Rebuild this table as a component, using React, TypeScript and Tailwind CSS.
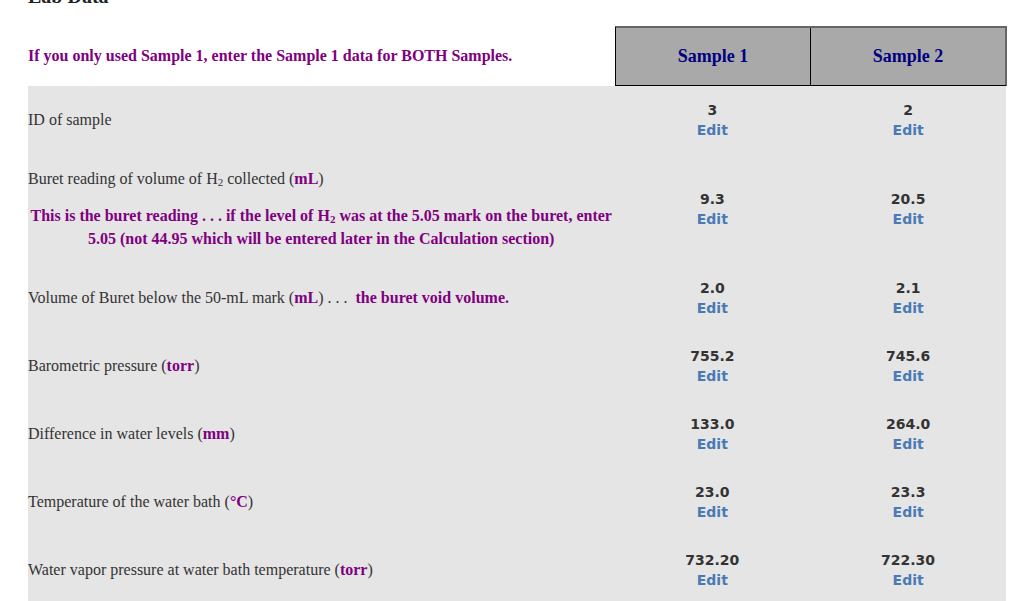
const rows = [
  { label: "ID of sample", s1: "3", s2: "2" },
  { label: "buret", s1: "9.3", s2: "20.5" },
  { label: "void", s1: "2.0", s2: "2.1" },
  { label: "Barometric pressure", unit: "torr", s1: "755.2", s2: "745.6" },
  { label: "Difference in water levels", unit: "mm", s1: "133.0", s2: "264.0" },
  { label: "Temperature of the water bath", unit: "°C", s1: "23.0", s2: "23.3" },
  { label: "Water vapor pressure at water bath temperature", unit: "torr", s1: "732.20", s2: "722.30" },
];

function Value({ v }: { v: string }) {
  return (
    <div className="w-[196px] flex flex-col items-center justify-center font-['DejaVu_Sans',Verdana,sans-serif] font-bold text-[14px] leading-[20px]">
      <div className="text-[#333]">{v}</div>
      <a className="text-[#4a7ab5] cursor-pointer">Edit</a>
    </div>
  );
}

function Label({ r }: { r: (typeof rows)[number] }) {
  if (r.label === "buret") {
    return (
      <div className="w-full">
        <div className="leading-[20px]">
          Buret reading of volume of H<sub className="text-[11px]">2</sub> collected (<b className="text-[#800080]">mL</b>)
        </div>
        <div className="mt-[15px] leading-[23px] text-center font-bold text-[#800080] whitespace-nowrap">
          This is the buret reading . . . if the level of H<sub className="text-[11px]">2</sub> was at the 5.05 mark on the buret, enter
          <br />
          5.05 (not 44.95 which will be entered later in the Calculation section)
        </div>
      </div>
    );
  }
  if (r.label === "void") {
    return (
      <div>
        Volume of Buret below the 50-mL mark (<b className="text-[#800080]">mL</b>) . . .&nbsp;{" "}
        <b className="text-[#800080]">the buret void volume.</b>
      </div>
    );
  }
  return (
    <div>
      {r.label}
      {r.unit && (
        <>
          {" "}(<b className="text-[#800080]">{r.unit}</b>)
        </>
      )}
    </div>
  );
}

export default function App() {
  return (
    <div className="bg-white w-[1024px] h-[601px] overflow-hidden pl-[28px] font-['Liberation_Serif','Times_New_Roman',serif] text-[16px] text-[#333]">
      <h3 className="text-[20px] leading-[20px] font-bold text-[#222] -mt-[14px] mb-[20px]">Lab Data</h3>

      <div className="flex h-[60px]">
        <div className="w-[587px] flex items-center font-bold text-[#800080]">
          If you only used Sample 1, enter the Sample 1 data for BOTH Samples.
        </div>
        <div className="flex bg-[#a9a9a9] border-t-2 border-r-2 border-t-[#666] border-r-[#666] border-l border-b border-l-black border-b-black">
          <div className="w-[195px] flex items-center justify-center border-r border-black font-bold text-[18px] text-[#000080]">Sample 1</div>
          <div className="w-[194px] flex items-center justify-center font-bold text-[18px] text-[#000080]">Sample 2</div>
        </div>
      </div>

      <div className="w-[978px] bg-[#e5e5e5]">
        {rows.map((r) => (
          <div key={r.label} className={`flex ${r.label === "buret" ? "h-[110px]" : "h-[68px]"}`}>
            <div className="w-[587px] flex items-center">
              <Label r={r} />
            </div>
            <Value v={r.s1} />
            <Value v={r.s2} />
          </div>
        ))}
      </div>
    </div>
  );
}
